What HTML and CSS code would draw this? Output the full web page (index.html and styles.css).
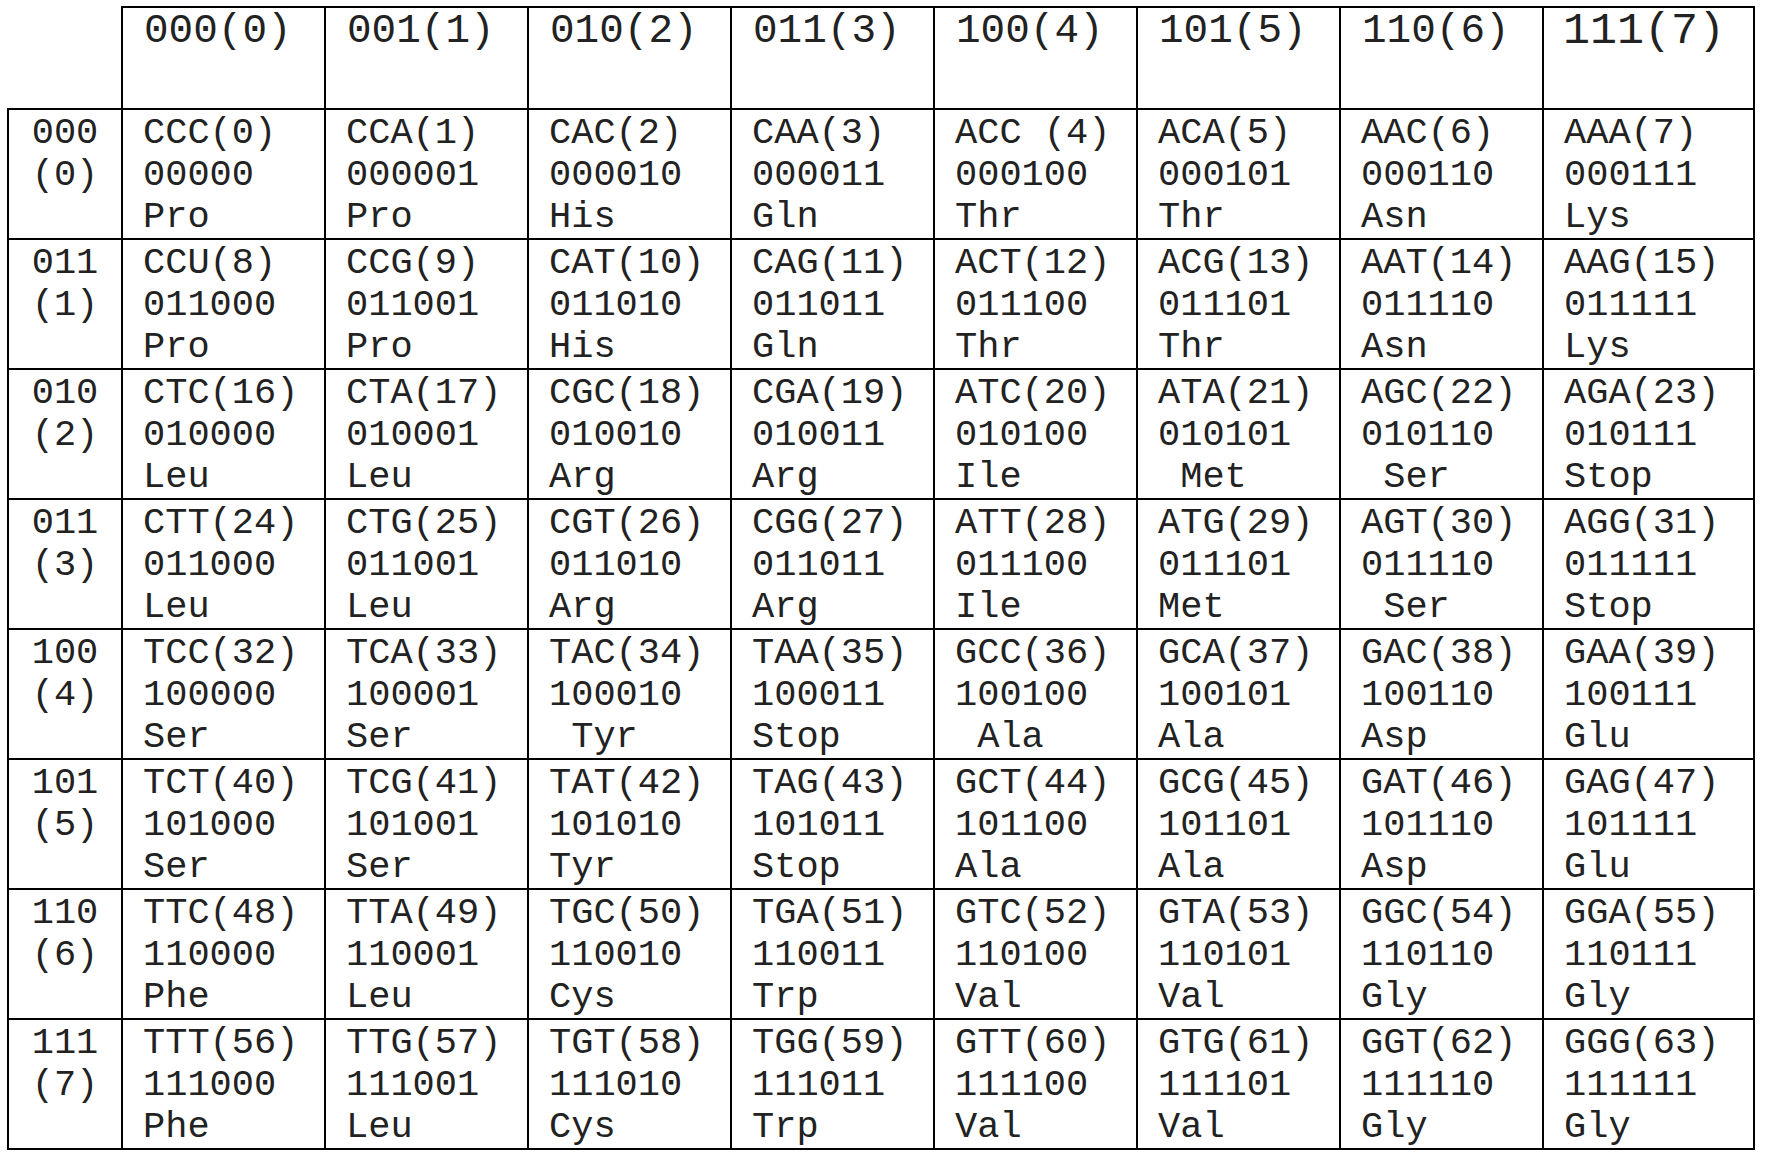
FILE: index.html
```html
<!DOCTYPE html>
<html>
<head>
<meta charset="utf-8">
<link rel="stylesheet" href="styles.css">
</head>
<body>
<table class="codons">
  <colgroup>
    <col class="c-label">
    <col class="c-std"><col class="c-std"><col class="c-std"><col class="c-std">
    <col class="c-std"><col class="c-std"><col class="c-std"><col class="c-last">
  </colgroup>
  <tr class="head">
    <td class="corner"></td>
    <td class="h">000(0)</td><td class="h">001(1)</td><td class="h">010(2)</td><td class="h">011(3)</td>
    <td class="h">100(4)</td><td class="h">101(5)</td><td class="h">110(6)</td><td class="h big">111(7)</td>
  </tr>
  <tr>
    <td class="lab">000<br>(0)</td>
    <td>CCC(0)<br>00000<br>Pro</td><td>CCA(1)<br>000001<br>Pro</td><td>CAC(2)<br>000010<br>His</td><td>CAA(3)<br>000011<br>Gln</td>
    <td>ACC (4)<br>000100<br>Thr</td><td>ACA(5)<br>000101<br>Thr</td><td>AAC(6)<br>000110<br>Asn</td><td>AAA(7)<br>000111<br>Lys</td>
  </tr>
  <tr>
    <td class="lab">011<br>(1)</td>
    <td>CCU(8)<br>011000<br>Pro</td><td>CCG(9)<br>011001<br>Pro</td><td>CAT(10)<br>011010<br>His</td><td>CAG(11)<br>011011<br>Gln</td>
    <td>ACT(12)<br>011100<br>Thr</td><td>ACG(13)<br>011101<br>Thr</td><td>AAT(14)<br>011110<br>Asn</td><td>AAG(15)<br>011111<br>Lys</td>
  </tr>
  <tr>
    <td class="lab">010<br>(2)</td>
    <td>CTC(16)<br>010000<br>Leu</td><td>CTA(17)<br>010001<br>Leu</td><td>CGC(18)<br>010010<br>Arg</td><td>CGA(19)<br>010011<br>Arg</td>
    <td>ATC(20)<br>010100<br>Ile</td><td>ATA(21)<br>010101<br> Met</td><td>AGC(22)<br>010110<br> Ser</td><td>AGA(23)<br>010111<br>Stop</td>
  </tr>
  <tr>
    <td class="lab">011<br>(3)</td>
    <td>CTT(24)<br>011000<br>Leu</td><td>CTG(25)<br>011001<br>Leu</td><td>CGT(26)<br>011010<br>Arg</td><td>CGG(27)<br>011011<br>Arg</td>
    <td>ATT(28)<br>011100<br>Ile</td><td>ATG(29)<br>011101<br>Met</td><td>AGT(30)<br>011110<br> Ser</td><td>AGG(31)<br>011111<br>Stop</td>
  </tr>
  <tr>
    <td class="lab">100<br>(4)</td>
    <td>TCC(32)<br>100000<br>Ser</td><td>TCA(33)<br>100001<br>Ser</td><td>TAC(34)<br>100010<br> Tyr</td><td>TAA(35)<br>100011<br>Stop</td>
    <td>GCC(36)<br>100100<br> Ala</td><td>GCA(37)<br>100101<br>Ala</td><td>GAC(38)<br>100110<br>Asp</td><td>GAA(39)<br>100111<br>Glu</td>
  </tr>
  <tr>
    <td class="lab">101<br>(5)</td>
    <td>TCT(40)<br>101000<br>Ser</td><td>TCG(41)<br>101001<br>Ser</td><td>TAT(42)<br>101010<br>Tyr</td><td>TAG(43)<br>101011<br>Stop</td>
    <td>GCT(44)<br>101100<br>Ala</td><td>GCG(45)<br>101101<br>Ala</td><td>GAT(46)<br>101110<br>Asp</td><td>GAG(47)<br>101111<br>Glu</td>
  </tr>
  <tr>
    <td class="lab">110<br>(6)</td>
    <td>TTC(48)<br>110000<br>Phe</td><td>TTA(49)<br>110001<br>Leu</td><td>TGC(50)<br>110010<br>Cys</td><td>TGA(51)<br>110011<br>Trp</td>
    <td>GTC(52)<br>110100<br>Val</td><td>GTA(53)<br>110101<br>Val</td><td>GGC(54)<br>110110<br>Gly</td><td>GGA(55)<br>110111<br>Gly</td>
  </tr>
  <tr>
    <td class="lab">111<br>(7)</td>
    <td>TTT(56)<br>111000<br>Phe</td><td>TTG(57)<br>111001<br>Leu</td><td>TGT(58)<br>111010<br>Cys</td><td>TGG(59)<br>111011<br>Trp</td>
    <td>GTT(60)<br>111100<br>Val</td><td>GTG(61)<br>111101<br>Val</td><td>GGT(62)<br>111110<br>Gly</td><td>GGG(63)<br>111111<br>Gly</td>
  </tr>
</table>
</body>
</html>
```
FILE: styles.css
```css
html, body {
  margin: 0;
  padding: 0;
  background: #fff;
}

.codons {
  margin: 6px 0 0 7px;
  border-collapse: collapse;
  table-layout: fixed;
  width: 1746px;
  font-family: "Courier New", "Liberation Mono", monospace;
  color: #222;
}

.c-label { width: 114px; }
.c-std { width: 203px; }
.c-last { width: 211px; }

.codons td {
  border: 2px solid #000;
  vertical-align: top;
  white-space: pre;
  font-size: 37px;
  line-height: 42px;
  padding: 2px 0 0 20px;
  height: 128px;
  box-sizing: border-box;
}

.codons .head td {
  height: 102px;
  padding-top: 0;
}

.codons td.corner {
  border-top: none;
  border-left: none;
  padding: 0;
}

.codons td.h {
  font-size: 41px;
  line-height: 46px;
  padding-left: 21px;
}

.codons td.h.big {
  font-size: 45px;
  line-height: 48px;
  padding-left: 19px;
}

.codons td.lab {
  text-align: center;
  padding-left: 0;
}
```
